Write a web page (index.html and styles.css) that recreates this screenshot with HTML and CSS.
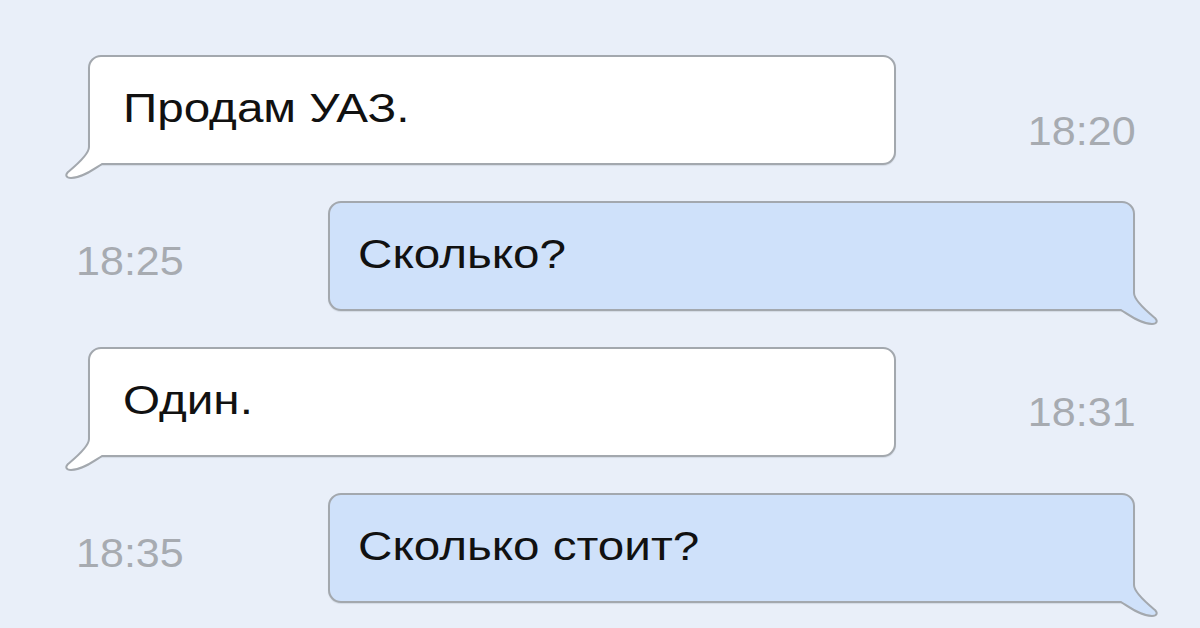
FILE: index.html
```html
<!DOCTYPE html>
<html lang="ru">
<head>
  <meta charset="UTF-8" />
  <title>Продам УАЗ</title>
  <meta name="viewport" content="width=device-width, initial-scale=1" />
  <link rel="stylesheet" href="styles.css">
</head>
<body>
  <div class="chat">
    <div class="row row-in">
      <div class="bubble bubble-in">
        <span class="text">Продам УАЗ.</span>
        <svg class="tail" viewBox="0 0 60 50" width="60" height="50">
          <path class="tail-fill" d="M27 0 L27 16 C27 24 12 36 6 41 C3 44 4 47 9 47 C20 47 32 38 40 33 L60 33 L60 0 Z" />
          <path class="tail-line" d="M27 0 L27 16 C27 24 12 36 6 41 C3 44 4 47 9 47 C20 47 32 38 40 33 L60 33" />
        </svg>
      </div>
      <div class="time">18:20</div>
    </div>

    <div class="row row-out">
      <div class="time">18:25</div>
      <div class="bubble bubble-out">
        <span class="text">Сколько?</span>
        <svg class="tail" viewBox="0 0 60 50" width="60" height="50">
          <path class="tail-fill" d="M27 0 L27 16 C27 24 12 36 6 41 C3 44 4 47 9 47 C20 47 32 38 40 33 L60 33 L60 0 Z" />
          <path class="tail-line" d="M27 0 L27 16 C27 24 12 36 6 41 C3 44 4 47 9 47 C20 47 32 38 40 33 L60 33" />
        </svg>
      </div>
    </div>

    <div class="row row-in">
      <div class="bubble bubble-in">
        <span class="text">Один.</span>
        <svg class="tail" viewBox="0 0 60 50" width="60" height="50">
          <path class="tail-fill" d="M27 0 L27 16 C27 24 12 36 6 41 C3 44 4 47 9 47 C20 47 32 38 40 33 L60 33 L60 0 Z" />
          <path class="tail-line" d="M27 0 L27 16 C27 24 12 36 6 41 C3 44 4 47 9 47 C20 47 32 38 40 33 L60 33" />
        </svg>
      </div>
      <div class="time time-high">18:31</div>
    </div>

    <div class="row row-out">
      <div class="time">18:35</div>
      <div class="bubble bubble-out">
        <span class="text">Сколько стоит?</span>
        <svg class="tail" viewBox="0 0 60 50" width="60" height="50">
          <path class="tail-fill" d="M27 0 L27 16 C27 24 12 36 6 41 C3 44 4 47 9 47 C20 47 32 38 40 33 L60 33 L60 0 Z" />
          <path class="tail-line" d="M27 0 L27 16 C27 24 12 36 6 41 C3 44 4 47 9 47 C20 47 32 38 40 33 L60 33" />
        </svg>
      </div>
    </div>
  </div>
</body>
</html>
```

FILE: styles.css
```css
body {
  margin: 0;
  background: #e9eff9;
  font-family: "Liberation Sans", Arial, sans-serif;
  overflow: hidden;
}
.chat {
  display: flex;
  flex-direction: column;
  gap: 36px;
  padding-top: 55px;
  padding-bottom: 25px;
}
.row {
  display: flex;
  align-items: center;
  height: 110px;
}
.row-in {
  padding-left: 88px;
  padding-right: 64px;
}
.row-out {
  padding-left: 76px;
}
.bubble {
  position: relative;
  box-sizing: border-box;
  width: 808px;
  height: 110px;
  border: 2px solid #a3a8ae;
  border-radius: 13px;
  display: flex;
  align-items: center;
  box-shadow: 0 1px 1px rgba(90, 100, 115, 0.15);
}
.bubble-in {
  background: #fff;
  border-bottom-left-radius: 0;
  padding-left: 33px;
}
.bubble-out {
  background: #cfe1fa;
  border-bottom-right-radius: 0;
  padding-left: 28px;
  margin-left: auto;
  margin-right: 65px;
  width: 807px;
}
.text {
  display: inline-block;
  font-size: 40px;
  color: #111;
  margin-top: -4px;
  transform: scaleX(1.19);
  transform-origin: left center;
}
.time {
  font-size: 41px;
  color: #a7abb1;
  transform: scaleX(1.05);
}
.row-in .time {
  margin-left: auto;
  padding-top: 42px;
  transform-origin: right center;
}
.row-in .time-high {
  padding-top: 20px;
}
.row-out .time {
  padding-top: 10px;
  transform-origin: left center;
}
.tail {
  position: absolute;
  bottom: -18px;
  left: -28px;
}
.bubble-out .tail {
  left: auto;
  right: -28px;
  transform: scaleX(-1);
}
.tail-fill {
  fill: #fff;
}
.bubble-out .tail-fill {
  fill: #cfe1fa;
}
.tail-line {
  fill: none;
  stroke: #a3a8ae;
  stroke-width: 2;
}
```
